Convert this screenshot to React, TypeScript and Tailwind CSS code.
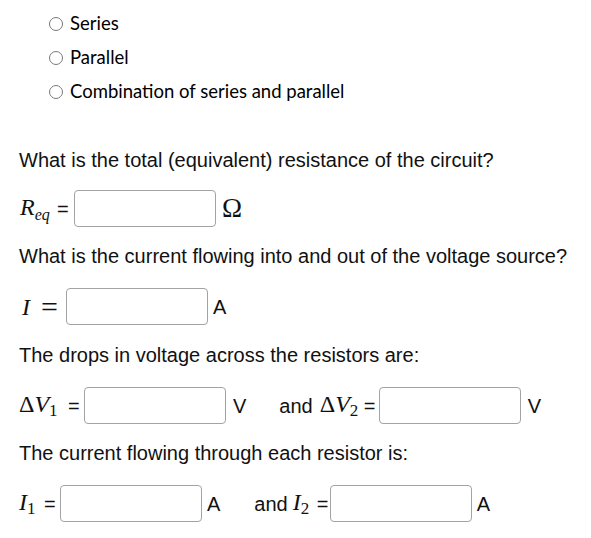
const options = ["Series", "Parallel", "Combination of series and parallel"];

function Radio({ label }: { label: string }) {
	return (
		<label className="flex items-center h-[34px]">
			<span className="w-[14px] h-[14px] rounded-full border border-[#7a7a7a] bg-white" />
			<span className="ml-[7px] text-[18.5px] text-black" style={{ fontFamily: "Lato, 'Open Sans', sans-serif" }}>
				{label}
			</span>
		</label>
	);
}

function Box() {
	return (
		<input
			type="text"
			className="w-[142px] h-[37px] shrink-0 rounded-[4px] border border-[#a3a3a3] bg-white outline-none"
		/>
	);
}

const serif = { fontFamily: "'Liberation Serif', 'DejaVu Serif', serif" };

function Question({ text, className = "" }: { text: string; className?: string }) {
	return <p className={`h-[24px] leading-[24px] text-[20px] text-[#111] whitespace-nowrap ${className}`}>{text}</p>;
}

export default function App() {
	return (
		<main
			className="w-[591px] h-[538px] bg-white text-[#111] overflow-hidden"
			style={{ fontFamily: "'Liberation Sans', Arial, sans-serif" }}
		>
			<section className="pt-[7px] pl-[49px] flex flex-col">
				{options.map((o) => (
					<Radio key={o} label={o} />
				))}
			</section>

			<section className="pl-[19px] flex flex-col">
				<Question text="What is the total (equivalent) resistance of the circuit?" className="mt-[39px]" />

				{/* R_eq */}
				<div className="flex items-center h-[37px] mt-[18px] text-[20px]">
					<span className="w-[38px] pl-[1px] text-[24px] italic leading-none whitespace-nowrap" style={serif}>
						R<span className="text-[16px] align-[-5px]">eq</span>
					</span>
					<span className="w-[17px]">=</span>
					<Box />
					<span className="ml-[6px] text-[27px] leading-none" style={serif}>Ω</span>
				</div>

				<Question text="What is the current flowing into and out of the voltage source?" className="mt-[17px]" />

				{/* I */}
				<div className="flex items-center h-[37px] mt-[20px] text-[20px]">
					<span className="w-[22px] pl-[3px] text-[24px] italic leading-none" style={serif}>I</span>
					<span className="w-[25px] text-[30px] leading-none" style={serif}>=</span>
					<Box />
					<span className="ml-[5px]">A</span>
				</div>

				<Question text="The drops in voltage across the resistors are:" className="mt-[18px]" />

				{/* delta V */}
				<div className="flex items-center h-[37px] mt-[20px] text-[20px]">
					<span className="w-[49px] text-[24px] leading-none whitespace-nowrap" style={serif}>
						Δ<i>V</i><span className="text-[17px] align-[-4px]">1</span>
					</span>
					<span className="w-[16px]">=</span>
					<Box />
					<span className="ml-[7px]">V</span>
					<span className="ml-[33px]">and</span>
					<span className="ml-[7px] w-[44px] text-[24px] leading-none whitespace-nowrap" style={serif}>
						Δ<i>V</i><span className="text-[17px] align-[-4px]">2</span>
					</span>
					<span className="w-[15px]">=</span>
					<Box />
					<span className="ml-[7px]">V</span>
				</div>

				<Question text="The current flowing through each resistor is:" className="mt-[17px]" />

				{/* I1, I2 */}
				<div className="flex items-center h-[37px] mt-[20px] text-[20px]">
					<span className="w-[25px] text-[24px] italic leading-none whitespace-nowrap" style={serif}>
						I<span className="not-italic text-[17px] align-[-4px]">1</span>
					</span>
					<span className="w-[16px]">=</span>
					<Box />
					<span className="ml-[5px]">A</span>
					<span className="ml-[34px]">and</span>
					<span className="ml-[5px] w-[24px] text-[24px] italic leading-none whitespace-nowrap" style={serif}>
						I<span className="not-italic text-[17px] align-[-4px]">2</span>
					</span>
					<span className="w-[13px]">=</span>
					<Box />
					<span className="ml-[5px]">A</span>
				</div>
			</section>
		</main>
	);
}
